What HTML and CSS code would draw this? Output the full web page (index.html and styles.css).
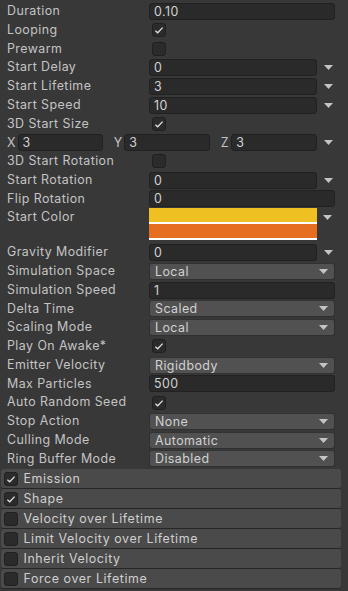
FILE: index.html
```html
<!DOCTYPE html>
<html>
<head>
<meta charset="utf-8">
<link rel="stylesheet" href="styles.css">
</head>
<body>
<div class="inspector">
  <div class="props">
    <div class="row"><span class="label">Duration</span><div class="field">0.10</div></div>
    <div class="row"><span class="label">Looping</span><span class="check"><svg width="14" height="14" viewBox="0 0 14 14"><path d="M3.4 7.8 L5.7 9.8 L10.6 4.6" fill="none" stroke="#e0e0e0" stroke-width="1.3"/></svg></span></div>
    <div class="row"><span class="label">Prewarm</span><span class="check"></span></div>
    <div class="row"><span class="label">Start Delay</span><div class="field">0</div><span class="curve"><svg width="9" height="5" viewBox="0 0 9 5"><path d="M0 0H9L4.5 5Z"/></svg></span></div>
    <div class="row"><span class="label">Start Lifetime</span><div class="field">3</div><span class="curve"><svg width="9" height="5" viewBox="0 0 9 5"><path d="M0 0H9L4.5 5Z"/></svg></span></div>
    <div class="row"><span class="label">Start Speed</span><div class="field">10</div><span class="curve"><svg width="9" height="5" viewBox="0 0 9 5"><path d="M0 0H9L4.5 5Z"/></svg></span></div>
    <div class="row"><span class="label">3D Start Size</span><span class="check"><svg width="14" height="14" viewBox="0 0 14 14"><path d="M3.4 7.8 L5.7 9.8 L10.6 4.6" fill="none" stroke="#e0e0e0" stroke-width="1.3"/></svg></span></div>
    <div class="row">
      <div class="xyz">
        <div class="axis"><span class="axis-label">X</span><div class="field">3</div></div>
        <div class="axis"><span class="axis-label">Y</span><div class="field">3</div></div>
        <div class="axis"><span class="axis-label">Z</span><div class="field">3</div></div>
      </div>
      <span class="curve"><svg width="9" height="5" viewBox="0 0 9 5"><path d="M0 0H9L4.5 5Z"/></svg></span>
    </div>
    <div class="row"><span class="label">3D Start Rotation</span><span class="check"></span></div>
    <div class="row"><span class="label">Start Rotation</span><div class="field">0</div><span class="curve"><svg width="9" height="5" viewBox="0 0 9 5"><path d="M0 0H9L4.5 5Z"/></svg></span></div>
    <div class="row"><span class="label">Flip Rotation</span><div class="field">0</div></div>
    <div class="row color-row">
      <span class="label">Start Color</span>
      <div class="colors">
        <div class="swatch yellow"></div><div class="alpha"></div>
        <div class="swatch orange"></div><div class="alpha"></div>
      </div>
      <span class="curve"><svg width="9" height="5" viewBox="0 0 9 5"><path d="M0 0H9L4.5 5Z"/></svg></span>
    </div>
    <div class="row"><span class="label">Gravity Modifier</span><div class="field">0</div><span class="curve"><svg width="9" height="5" viewBox="0 0 9 5"><path d="M0 0H9L4.5 5Z"/></svg></span></div>
    <div class="row"><span class="label">Simulation Space</span><div class="popup">Local<svg width="9" height="5" viewBox="0 0 9 5"><path d="M0 0H9L4.5 5Z"/></svg></div></div>
    <div class="row"><span class="label">Simulation Speed</span><div class="field">1</div></div>
    <div class="row"><span class="label">Delta Time</span><div class="popup">Scaled<svg width="9" height="5" viewBox="0 0 9 5"><path d="M0 0H9L4.5 5Z"/></svg></div></div>
    <div class="row"><span class="label">Scaling Mode</span><div class="popup">Local<svg width="9" height="5" viewBox="0 0 9 5"><path d="M0 0H9L4.5 5Z"/></svg></div></div>
    <div class="row"><span class="label">Play On Awake*</span><span class="check"><svg width="14" height="14" viewBox="0 0 14 14"><path d="M3.4 7.8 L5.7 9.8 L10.6 4.6" fill="none" stroke="#e0e0e0" stroke-width="1.3"/></svg></span></div>
    <div class="row"><span class="label">Emitter Velocity</span><div class="popup">Rigidbody<svg width="9" height="5" viewBox="0 0 9 5"><path d="M0 0H9L4.5 5Z"/></svg></div></div>
    <div class="row"><span class="label">Max Particles</span><div class="field">500</div></div>
    <div class="row"><span class="label">Auto Random Seed</span><span class="check"><svg width="14" height="14" viewBox="0 0 14 14"><path d="M3.4 7.8 L5.7 9.8 L10.6 4.6" fill="none" stroke="#e0e0e0" stroke-width="1.3"/></svg></span></div>
    <div class="row"><span class="label">Stop Action</span><div class="popup">None<svg width="9" height="5" viewBox="0 0 9 5"><path d="M0 0H9L4.5 5Z"/></svg></div></div>
    <div class="row"><span class="label">Culling Mode</span><div class="popup">Automatic<svg width="9" height="5" viewBox="0 0 9 5"><path d="M0 0H9L4.5 5Z"/></svg></div></div>
    <div class="row"><span class="label">Ring Buffer Mode</span><div class="popup">Disabled<svg width="9" height="5" viewBox="0 0 9 5"><path d="M0 0H9L4.5 5Z"/></svg></div></div>
  </div>
  <div class="modules">
    <div class="module"><span class="check"><svg width="14" height="14" viewBox="0 0 14 14"><path d="M3.4 7.8 L5.7 9.8 L10.6 4.6" fill="none" stroke="#e0e0e0" stroke-width="1.3"/></svg></span><span class="module-name">Emission</span></div>
    <div class="module"><span class="check"><svg width="14" height="14" viewBox="0 0 14 14"><path d="M3.4 7.8 L5.7 9.8 L10.6 4.6" fill="none" stroke="#e0e0e0" stroke-width="1.3"/></svg></span><span class="module-name">Shape</span></div>
    <div class="module"><span class="check"></span><span class="module-name">Velocity over Lifetime</span></div>
    <div class="module"><span class="check"></span><span class="module-name">Limit Velocity over Lifetime</span></div>
    <div class="module"><span class="check"></span><span class="module-name">Inherit Velocity</span></div>
    <div class="module"><span class="check"></span><span class="module-name">Force over Lifetime</span></div>
  </div>
</div>
</body>
</html>
```

FILE: styles.css
```css
html, body {
  margin: 0;
  padding: 0;
  background: #383838;
}

.inspector {
  width: 348px;
  height: 591px;
  overflow: hidden;
  font-family: Inter, "Noto Sans", sans-serif;
  font-size: 12.4px;
  letter-spacing: 0.45px;
  color: #c4c4c4;
}

.props {
  padding: 2px 13px 0 7px;
}

.row {
  display: flex;
  align-items: center;
  height: 18.75px;
}

.label {
  flex: none;
  width: 142px;
  white-space: nowrap;
  line-height: 18.75px;
}

.field {
  flex: 1;
  min-width: 0;
  height: 17px;
  box-sizing: border-box;
  background: #2a2a2a;
  border: 1px solid #212121;
  border-radius: 3px;
  padding-left: 4px;
  line-height: 15px;
  color: #d2d2d2;
  white-space: nowrap;
}

.curve {
  flex: none;
  width: 18px;
  display: flex;
  justify-content: flex-start;
  padding-left: 7px;
  box-sizing: border-box;
}

.curve svg, .popup svg {
  fill: #c4c4c4;
  display: block;
}

.check {
  flex: none;
  width: 14px;
  height: 14px;
  box-sizing: border-box;
  margin-left: 2.5px;
  background: #2b2b2b;
  border: 1px solid #202020;
  border-radius: 3px;
  position: relative;
}

.check svg {
  position: absolute;
  left: -1px;
  top: -1px;
}

.xyz {
  flex: 1;
  display: grid;
  grid-template-columns: repeat(3, 1fr);
  column-gap: 10.5px;
}

.axis {
  display: flex;
  align-items: center;
}

.axis-label {
  flex: none;
  width: 10.5px;
}

.color-row {
  height: 35px;
  align-items: flex-start;
}

.colors {
  flex: 1;
  margin-right: -1.5px;
  display: flex;
  flex-direction: column;
}

.swatch {
  height: 14px;
}

.yellow {
  background: #efc022;
}

.orange {
  background: #e56e21;
}

.alpha {
  height: 2px;
  background: #ffffff;
}

.color-row .curve {
  margin-left: 1.5px;
  padding-left: 5.5px;
  height: 18.75px;
  align-items: center;
}

.popup {
  flex: 1;
  height: 17px;
  box-sizing: border-box;
  display: flex;
  align-items: center;
  justify-content: space-between;
  background: #515151;
  border: 1px solid #303030;
  border-top-color: #333333;
  border-radius: 3px;
  padding: 0 6px 0 5px;
  color: #d2d2d2;
  white-space: nowrap;
}

.modules {
  margin-top: 1px;
  padding: 0 7px 0 1px;
}

.module {
  display: flex;
  align-items: center;
  height: 20px;
  box-sizing: border-box;
  background: #4a4a4a;
  border-bottom: 1px solid #262626;
  border-radius: 3px;
  color: #d0d0d0;
  letter-spacing: 0.6px;
}

.module .check {
  margin-left: 3px;
}

.module-name {
  margin-left: 5.5px;
  white-space: nowrap;
}
```
